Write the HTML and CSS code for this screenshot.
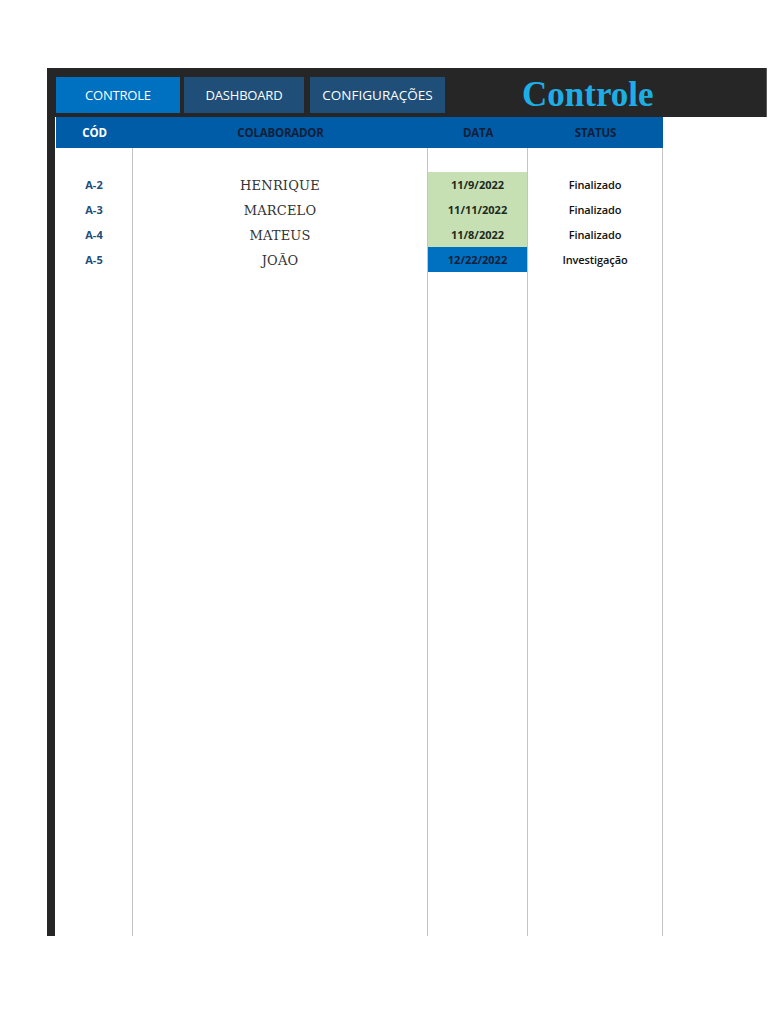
FILE: index.html
```html
<!DOCTYPE html>
<html lang="pt">
<head>
<meta charset="utf-8">
<link rel="stylesheet" href="styles.css">
</head>
<body>
<div class="sheet">
  <div class="topbar">
    <div class="tabs">
      <div class="tab tab-active">CONTROLE</div>
      <div class="tab">DASHBOARD</div>
      <div class="tab tab-wide">CONFIGURAÇÕES</div>
    </div>
    <div class="title">Controle</div>
  </div>
  <div class="main">
    <div class="strip"></div>
    <div class="table">
      <div class="head">
        <div class="hcell h-cod">CÓD</div>
        <div class="hcell h-colab">COLABORADOR</div>
        <div class="hcell h-data">DATA</div>
        <div class="hcell h-status">STATUS</div>
      </div>
      <div class="cols">
        <div class="col col-cod">
          <div class="cell cod">A-2</div>
          <div class="cell cod">A-3</div>
          <div class="cell cod">A-4</div>
          <div class="cell cod">A-5</div>
        </div>
        <div class="col col-colab">
          <div class="cell name">HENRIQUE</div>
          <div class="cell name">MARCELO</div>
          <div class="cell name">MATEUS</div>
          <div class="cell name">JOÃO</div>
        </div>
        <div class="col col-data">
          <div class="cell date done">11/9/2022</div>
          <div class="cell date done">11/11/2022</div>
          <div class="cell date done">11/8/2022</div>
          <div class="cell date inv">12/22/2022</div>
        </div>
        <div class="col col-status">
          <div class="cell status">Finalizado</div>
          <div class="cell status">Finalizado</div>
          <div class="cell status">Finalizado</div>
          <div class="cell status">Investigação</div>
        </div>
      </div>
    </div>
  </div>
</div>
</body>
</html>
```
FILE: styles.css
```css
html, body {
  margin: 0;
  padding: 0;
  background: #ffffff;
}
body {
  font-family: "Open Sans", "Noto Sans", sans-serif;
}
.sheet {
  padding-top: 68px;
  padding-left: 47px;
  width: 720px;
}
.topbar {
  height: 49px;
  background: #262626;
  border-right: 1px solid #5a5a5a;
  display: flex;
  align-items: flex-start;
  box-sizing: border-box;
  padding: 9px 0 0 9px;
}
.tabs {
  display: flex;
  gap: 4px;
}
.tab {
  height: 36px;
  width: 120px;
  background: #1f4e79;
  color: #ffffff;
  font-size: 13px;
  display: flex;
  align-items: center;
  justify-content: center;
  letter-spacing: -0.2px;
}
.tab-active {
  width: 124px;
  background: #0070c0;
}
.tab-wide {
  width: 135px;
  margin-left: 2px;
  font-size: 13.5px;
  letter-spacing: 0;
}
.title {
  margin-left: 77px;
  font-family: "Liberation Serif", "Times New Roman", serif;
  font-weight: bold;
  font-size: 35px;
  line-height: 36px;
  color: #1eaee6;
  white-space: nowrap;
}
.main {
  display: flex;
}
.strip {
  width: 8px;
  height: 819px;
  background: #262626;
  margin-right: 1px;
}
.table {
  width: 607px;
}
.head {
  display: grid;
  grid-template-columns: 77px 295px 100px 135px;
  height: 31px;
  background: #005ca6;
}
.hcell {
  display: flex;
  align-items: center;
  justify-content: center;
  font-size: 11.5px;
  font-weight: bold;
  color: #10203a;
  letter-spacing: -0.2px;
}
.h-cod { color: #ffffff; }
.cols {
  display: grid;
  grid-template-columns: 77px 295px 100px 135px;
  height: 788px;
}
.col {
  border-right: 1px solid #c4c4c4;
  padding-top: 24px;
}
.cell {
  height: 25px;
  display: flex;
  align-items: center;
  justify-content: center;
}
.name.cell { padding-top: 1px; box-sizing: border-box; }
.cod {
  color: #1f4e79;
  font-weight: bold;
  font-size: 11px;
}
.name {
  font-family: "DejaVu Serif", "Liberation Serif", serif;
  font-size: 13px;
  color: #333333;
  letter-spacing: 0.2px;
}
.date {
  font-size: 11px;
  font-weight: bold;
  color: #1e2a1e;
}
.done { background: #c6e0b4; }
.inv { background: #0070c0; color: #10203a; }
.status {
  font-size: 11px;
  font-weight: 600;
  color: #111111;
  letter-spacing: -0.1px;
}
```
